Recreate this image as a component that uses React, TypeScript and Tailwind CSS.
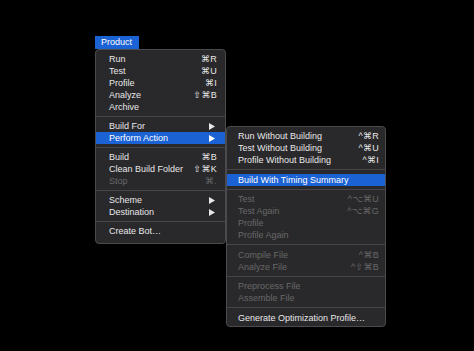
import React from 'react';

type Item =
  | { sep: true }
  | { label: string; key?: string; sub?: boolean; active?: boolean; disabled?: boolean; sep?: false };

const mainItems: Item[] = [
  { label: 'Run', key: '⌘R' },
  { label: 'Test', key: '⌘U' },
  { label: 'Profile', key: '⌘I' },
  { label: 'Analyze', key: '⇧⌘B' },
  { label: 'Archive' },
  { sep: true },
  { label: 'Build For', sub: true },
  { label: 'Perform Action', sub: true, active: true },
  { sep: true },
  { label: 'Build', key: '⌘B' },
  { label: 'Clean Build Folder', key: '⇧⌘K' },
  { label: 'Stop', key: '⌘.', disabled: true },
  { sep: true },
  { label: 'Scheme', sub: true },
  { label: 'Destination', sub: true },
  { sep: true },
  { label: 'Create Bot…' },
];

const subItems: Item[] = [
  { label: 'Run Without Building', key: '^⌘R' },
  { label: 'Test Without Building', key: '^⌘U' },
  { label: 'Profile Without Building', key: '^⌘I' },
  { sep: true },
  { label: 'Build With Timing Summary', active: true },
  { sep: true },
  { label: 'Test', key: '^⌥⌘U', disabled: true },
  { label: 'Test Again', key: '^⌥⌘G', disabled: true },
  { label: 'Profile', disabled: true },
  { label: 'Profile Again', disabled: true },
  { sep: true },
  { label: 'Compile File', key: '^⌘B', disabled: true },
  { label: 'Analyze File', key: '^⇧⌘B', disabled: true },
  { sep: true },
  { label: 'Preprocess File', disabled: true },
  { label: 'Assemble File', disabled: true },
  { sep: true },
  { label: 'Generate Optimization Profile…' },
];

const Arrow = () => (
  <svg width="6" height="7" viewBox="0 0 6 7" className="mr-[2px]">
    <path d="M0 0 L6 3.5 L0 7 Z" fill="currentColor" />
  </svg>
);

const Menu = ({ items, className, sepH, pad }: { items: Item[]; className: string; sepH: string; pad: string }) => (
  <div className={`flex flex-col rounded-[4px] border border-[#4b4b4d] bg-[#29292b] ${className}`}>
    {items.map((it, i) =>
      it.sep ? (
        <div key={i} className={`flex items-center ${sepH}`}>
          <div className="h-px w-full bg-[#464648]" />
        </div>
      ) : (
        <div
          key={i}
          className={`flex h-[12px] items-center justify-between leading-[12px] ${pad} ${
            it.active ? 'bg-[#1b62d4] text-white' : it.disabled ? 'text-[#686869]' : 'text-[#e8e8e8]'
          }`}
        >
          <span>{it.label}</span>
          {it.key && <span className="tracking-[0.3px]">{it.key}</span>}
          {it.sub && <Arrow />}
        </div>
      )
    )}
  </div>
);

export default function App() {
  return (
    <div
      className="flex h-[351px] w-[474px] items-start bg-black pl-[95px] pt-[36px] text-[9px]"
      style={{ fontFamily: '"Liberation Sans", "DejaVu Sans", sans-serif' }}
    >
      <div className="flex flex-col items-start">
        <div className="flex h-[13px] w-[44px] items-center bg-[#1b62d4] pl-[6px] leading-[13px] text-white">
          Product
        </div>
        <Menu items={mainItems} className="w-[131px] pt-[3px] pb-[6px]" sepH="h-[7px]" pad="pl-[13px] pr-[8px]" />
      </div>
      <Menu items={subItems} className="mt-[90px] w-[160px] pt-[3px] pb-[2px]" sepH="h-[7.5px]" pad="pl-[11px] pr-[6px]" />
    </div>
  );
}
